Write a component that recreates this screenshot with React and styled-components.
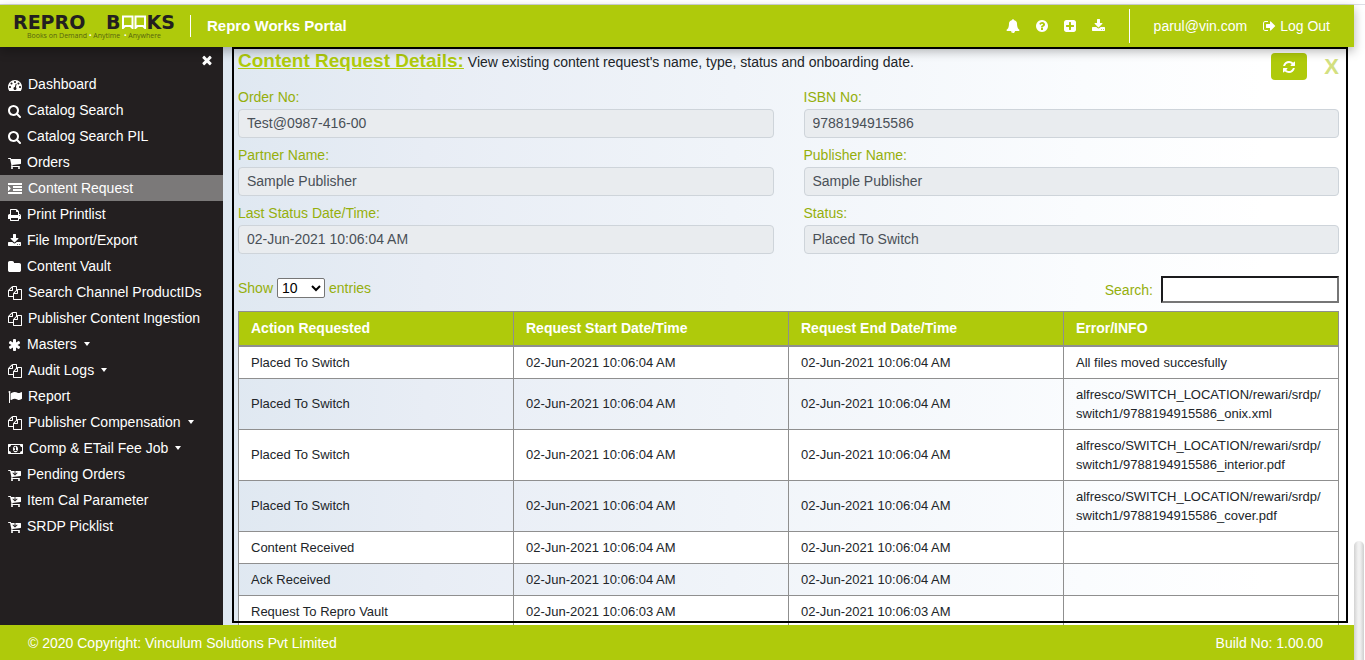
import React, { useState } from 'react';
import styled, { createGlobalStyle } from 'styled-components';

const GlobalStyle = createGlobalStyle`
  * {
    box-sizing: border-box;
  }
  body {
    margin: 0;
    background: #fff;
    color: #212529;
    font-family: 'Liberation Sans', Arial, sans-serif;
    font-size: 14px;
    line-height: 20px;
  }
  button, input, select {
    font-family: inherit;
    font-size: 14px;
  }
`;

const CART =
  'M704 1536q0 52-38 90t-90 38-90-38-38-90 38-90 90-38 90 38 38 90zm896 0q0 52-38 90t-90 38-90-38-38-90 38-90 90-38 90 38 38 90zm128-1088v512q0 24-16.5 42.5t-40.5 21.5l-1044 122q13 60 13 70 0 16-24 64h920q26 0 45 19t19 45-19 45-45 19h-1024q-26 0-45-19t-19-45q0-11 8-31.5t16-36 21.5-40 15.5-29.5l-177-823h-204q-26 0-45-19t-19-45 19-45 45-19h256q16 0 28.5 6.5t19.5 15.5 13 24.5 8 26 5.5 29.5 4.5 26h1201q26 0 45 19t19 45z';

// each icon: [left edge of the view box, glyph width, path]
const icons = {
  bell: [0, 1792, 'M912 1696q0-16-16-16-59 0-101.5-42.5t-42.5-101.5q0-16-16-16t-16 16q0 73 51.5 124.5t124.5 51.5q16 0 16-16zm816-288q0 52-38 90t-90 38h-448q0 106-75 181t-181 75-181-75-75-181h-448q-52 0-90-38t-38-90q50-42 91-88t85-119.5 74.5-158.5 50-206 19.5-260q0-152 117-282.5t307-158.5q-8-19-8-39 0-40 28-68t68-28 68 28 28 68q0 20-8 39 190 28 307 158.5t117 282.5q0 139 19.5 260t50 206 74.5 158.5 85 119.5 91 88z'],
  question: [128, 1536, 'M1024 1376v-192q0-14-9-23t-23-9h-192q-14 0-23 9t-9 23v192q0 14 9 23t23 9h192q14 0 23-9t9-23zm256-672q0-88-55.5-163t-138.5-116-170-41q-243 0-371 213-15 24 8 42l132 100q7 6 19 6 16 0 25-12 53-68 86-92 34-24 86-24 48 0 85.5 26t37.5 59q0 38-20 61t-68 45q-63 28-115.5 86.5t-52.5 125.5v36q0 14 9 23t23 9h192q14 0 23-9t9-23q0-19 21.5-49.5t54.5-49.5q32-18 49-28.5t46-35 44.5-48 28-60.5 12.5-81zm384 192q0 209-103 385.5t-279.5 279.5-385.5 103-385.5-103-279.5-279.5-103-385.5 103-385.5 279.5-279.5 385.5-103 385.5 103 279.5 279.5 103 385.5z'],
  plus: [128, 1536, 'M1408 960v-128q0-26-19-45t-45-19h-320v-320q0-26-19-45t-45-19h-128q-26 0-45 19t-19 45v320h-320q-26 0-45 19t-19 45v128q0 26 19 45t45 19h320v320q0 26 19 45t45 19h128q26 0 45-19t19-45v-320h320q26 0 45-19t19-45zm256-544v960q0 119-84.5 203.5t-203.5 84.5h-960q-119 0-203.5-84.5t-84.5-203.5v-960q0-119 84.5-203.5t203.5-84.5h960q119 0 203.5 84.5t84.5 203.5z'],
  download: [64, 1664, 'M1344 1344q0-26-19-45t-45-19-45 19-19 45 19 45 45 19 45-19 19-45zm256 0q0-26-19-45t-45-19-45 19-19 45 19 45 45 19 45-19 19-45zm128-224v320q0 40-28 68t-68 28h-1472q-40 0-68-28t-28-68v-320q0-40 28-68t68-28h465l135 136q58 56 136 56t136-56l136-136h464q40 0 68 28t28 68zm-325-569q17 41-14 70l-448 448q-18 19-45 19t-45-19l-448-448q-31-29-14-70 17-39 59-39h256v-448q0-26 19-45t45-19h256q26 0 45 19t19 45v448h256q42 0 59 39z'],
  signOut: [64, 1664, 'M704 1440q0 4 1 20t.5 26.5-3 23.5-10 19.5-20.5 6.5h-320q-119 0-203.5-84.5t-84.5-203.5v-704q0-119 84.5-203.5t203.5-84.5h320q13 0 22.5 9.5t9.5 22.5q0 4 1 20t.5 26.5-3 23.5-10 19.5-20.5 6.5h-320q-66 0-113 47t-47 113v704q0 66 47 113t113 47h312l11.5 1 11.5 3 8 5.5 7 9 2 13.5zm928-544q0 26-19 45l-544 544q-19 19-45 19t-45-19-19-45v-288h-448q-26 0-45-19t-19-45v-384q0-26 19-45t45-19h448v-288q0-26 19-45t45-19 45 19l544 544q19 19 19 45z'],
  refresh: [128, 1536, 'M1639 1056q0 5-1 7-64 268-268 434.5t-478 166.5q-146 0-282.5-55t-243.5-157l-129 129q-19 19-45 19t-45-19-19-45v-448q0-26 19-45t45-19h448q26 0 45 19t19 45-19 45l-137 137q71 66 161 102t187 36q134 0 250-65t186-179q11-17 53-117 8-23 30-23h192q13 0 22.5 9.5t9.5 22.5zm25-800v448q0 26-19 45t-45 19h-448q-26 0-45-19t-19-45 19-45l138-138q-148-137-349-137-134 0-250 65t-186 179q-11 17-53 117-8 23-30 23h-199q-13 0-22.5-9.5t-9.5-22.5v-7q65-268 270-434.5t480-166.5q146 0 284 55.5t245 156.5l130-129q19-19 45-19t45 19 19 45z'],
  close: [128, 1536, 'M1490 1322q0 40-28 68l-136 136q-28 28-68 28t-68-28l-294-294-294 294q-28 28-68 28t-68-28l-136-136q-28-28-28-68t28-68l294-294-294-294q-28-28-28-68t28-68l136-136q28-28 68-28t68 28l294 294 294-294q28-28 68-28t68 28l136 136q28 28 28 68t-28 68l-294 294 294 294q28 28 28 68z'],
  dashboard: [0, 1792, 'M384 1152q0-53-37.5-90.5t-90.5-37.5-90.5 37.5-37.5 90.5 37.5 90.5 90.5 37.5 90.5-37.5 37.5-90.5zm192-448q0-53-37.5-90.5t-90.5-37.5-90.5 37.5-37.5 90.5 37.5 90.5 90.5 37.5 90.5-37.5 37.5-90.5zm428 481l101-382q6-26-7.5-48.5t-38.5-29.5-48 6.5-30 39.5l-101 382q-60 5-107 43.5t-63 98.5q-20 77 20 146t117 89 146-20 89-117q16-60-6-117t-72-91zm660-33q0-53-37.5-90.5t-90.5-37.5-90.5 37.5-37.5 90.5 37.5 90.5 90.5 37.5 90.5-37.5 37.5-90.5zm-640-640q0-53-37.5-90.5t-90.5-37.5-90.5 37.5-37.5 90.5 37.5 90.5 90.5 37.5 90.5-37.5 37.5-90.5zm448 192q0-53-37.5-90.5t-90.5-37.5-90.5 37.5-37.5 90.5 37.5 90.5 90.5 37.5 90.5-37.5 37.5-90.5zm320 448q0 261-141 483-19 29-54 29h-1402q-35 0-54-29-141-221-141-483 0-182 71-348t191-286 286-191 348-71 348 71 286 191 191 286 71 348z'],
  search: [64, 1664, 'M1216 832q0-185-131.5-316.5t-316.5-131.5-316.5 131.5-131.5 316.5 131.5 316.5 316.5 131.5 316.5-131.5 131.5-316.5zm512 832q0 52-38 90t-90 38q-54 0-90-38l-343-342q-179 124-399 124-143 0-273.5-55.5t-225-150-150-225-55.5-273.5 55.5-273.5 150-225 225-150 273.5-55.5 273.5 55.5 225 150 150 225 55.5 273.5q0 220-124 399l343 343q37 37 37 90z'],
  cart: [64, 1664, CART],
  cartDown: [64, 1664, `${CART}M1280 640q0-26-19-45t-45-19-45 19l-147 146v-293q0-26-19-45t-45-19-45 19-19 45v293l-147-146q-19-19-45-19t-45 19-19 45 19 45l256 256q19 19 45 19t45-19l256-256q19-19 19-45z`],
  indent: [0, 1792, 'M352 832q0 14-9 23l-288 288q-9 9-23 9-13 0-22.5-9.5t-9.5-22.5v-576q0-13 9.5-22.5t22.5-9.5q14 0 23 9l288 288q9 9 9 23zm1440 480v192q0 13-9.5 22.5t-22.5 9.5h-1728q-13 0-22.5-9.5t-9.5-22.5v-192q0-13 9.5-22.5t22.5-9.5h1728q13 0 22.5 9.5t9.5 22.5zm0-384v192q0 13-9.5 22.5t-22.5 9.5h-1088q-13 0-22.5-9.5t-9.5-22.5v-192q0-13 9.5-22.5t22.5-9.5h1088q13 0 22.5 9.5t9.5 22.5zm0-384v192q0 13-9.5 22.5t-22.5 9.5h-1088q-13 0-22.5-9.5t-9.5-22.5v-192q0-13 9.5-22.5t22.5-9.5h1088q13 0 22.5 9.5t9.5 22.5zm0-384v192q0 13-9.5 22.5t-22.5 9.5h-1728q-13 0-22.5-9.5t-9.5-22.5v-192q0-13 9.5-22.5t22.5-9.5h1728q13 0 22.5 9.5t9.5 22.5z'],
  print: [64, 1664, 'M448 1536h896v-256h-896v256zm0-640h896v-384h-160q-40 0-68-28t-28-68v-160h-640v640zm1152 64q0-26-19-45t-45-19-45 19-19 45 19 45 45 19 45-19 19-45zm128 0v416q0 13-9.5 22.5t-22.5 9.5h-224v160q0 40-28 68t-68 28h-960q-40 0-68-28t-28-68v-160h-224q-13 0-22.5-9.5t-9.5-22.5v-416q0-79 56.5-135.5t135.5-56.5h64v-544q0-40 28-68t68-28h672q40 0 88 20t76 48l152 152q28 28 48 76t20 88v256h64q79 0 135.5 56.5t56.5 135.5z'],
  folder: [64, 1664, 'M1728 608v704q0 92-66 158t-158 66h-1216q-92 0-158-66t-66-158v-960q0-92 66-158t158-66h320q92 0 158 66t66 158v32h672q92 0 158 66t66 158z'],
  files: [0, 1792, 'M1696 384q40 0 68 28t28 68v1216q0 40-28 68t-68 28h-960q-40 0-68-28t-28-68v-288h-544q-40 0-68-28t-28-68v-672q0-40 20-88t48-76l408-408q28-28 76-48t88-20h416q40 0 68 28t28 68v328q68-40 128-40h416zm-544 213l-299 299h299v-299zm-640-384l-299 299h299v-299zm196 647l316-316v-416h-384v416q0 40-28 68t-68 28h-416v640h512v-256q0-40 20-88t48-76zm956 804v-1152h-384v416q0 40-28 68t-68 28h-416v640h896z'],
  asterisk: [64, 1664, 'M1546 1050q46 26 59.5 77.5t-12.5 97.5l-64 110q-26 46-77.5 59.5t-97.5-12.5l-266-153v307q0 52-38 90t-90 38h-128q-52 0-90-38t-38-90v-307l-266 153q-46 26-97.5 12.5t-77.5-59.5l-64-110q-26-46-12.5-97.5t59.5-77.5l266-154-266-154q-46-26-59.5-77.5t12.5-97.5l64-110q26-46 77.5-59.5t97.5 12.5l266 153v-307q0-52 38-90t90-38h128q52 0 90 38t38 90v307l266-153q46-26 97.5-12.5t77.5 59.5l64 110q26 46 12.5 97.5t-59.5 77.5l-266 154z'],
  flag: [0, 1792, 'M320 256q0 72-64 110v1266q0 13-9.5 22.5t-22.5 9.5h-64q-13 0-22.5-9.5t-9.5-22.5v-1266q-64-38-64-110 0-53 37.5-90.5t90.5-37.5 90.5 37.5 37.5 90.5zm1472 64v763q0 25-12.5 38.5t-39.5 27.5q-215 116-369 116-61 0-123.5-22t-108.5-48-115.5-48-142.5-22q-192 0-464 146-17 9-33 9-26 0-45-19t-19-45v-742q0-32 31-55 21-14 79-43 236-120 421-120 107 0 200 29t219 88q38 19 88 19 54 0 117.5-21t110-47 88-47 54.5-21q26 0 45 19t19 45z'],
  money: [0, 1920, 'M768 1152h384v-96h-128v-448h-114l-148 137 77 80q42-37 55-57h2v288h-128v96zm512-256q0 70-21 142t-59.5 134-101.5 101-138 39-138-39-101.5-101-59.5-134-21-142 21-142 59.5-134 101.5-101 138-39 138 39 101.5 101 59.5 134 21 142zm512 256v-512q-106 0-181-75t-75-181h-1152q0 106-75 181t-181 75v512q106 0 181 75t75 181h1152q0-106 75-181t181-75zm128-832v1152q0 26-19 45t-45 19h-1792q-26 0-45-19t-19-45v-1152q0-26 19-45t45-19h1792q26 0 45 19t19 45z'],
};

const Glyph = styled.svg`
  display: block;
  flex: none;
  height: 14px;
  fill: currentColor;
  fill-rule: evenodd;
`;

const Icon = ({ name }) => {
  const [left, width, path] = icons[name];
  return (
    <Glyph viewBox={`${left} 0 ${width} 1792`} width={width / 128} aria-hidden="true">
      <path d={path} />
    </Glyph>
  );
};

const Page = styled.div`
  display: grid;
  grid-template-columns: 1fr 11px;
  height: 100vh;
  padding-top: 4px;
  overflow: hidden;
`;

const Shell = styled.div`
  display: flex;
  flex-direction: column;
  min-width: 0;
  min-height: 0;
  border-top: 1px solid #d3d6d8;
`;

const Rail = styled.div`
  display: flex;
  align-items: flex-end;
  border-top: 1px solid #dcdfe6;
`;

const Thumb = styled.div`
  width: 10px;
  height: 18vh;
  border-radius: 5px 5px 0 0;
  background: linear-gradient(to right, #d2d2d2, #f1f1f1 40%, #f1f1f1 60%, #cfcfcf);
`;

const Header = styled.header`
  display: flex;
  align-items: center;
  flex: none;
  height: 42px;
  padding: 0 24px 0 13px;
  background: #afca0b;
  color: #fff;
  box-shadow: 0 4px 10px rgba(0, 0, 0, 0.3);
  z-index: 1;
`;

const Brand = styled.a`
  display: flex;
  flex-direction: column;
  align-items: center;
  width: 162px;
  color: #231f20;
  text-decoration: none;
`;

const BrandName = styled.span`
  display: flex;
  align-items: center;
  justify-content: space-between;
  width: 100%;
  font-family: 'DejaVu Sans', sans-serif;
  font-size: 19px;
  font-weight: bold;
  line-height: 18px;
`;

const BrandWord = styled.span`
  display: flex;
  align-items: center;
`;

const BookPair = styled.svg`
  width: 26px;
  height: 14px;
  fill: none;
  stroke: #fff;
  stroke-width: 2;
`;

const Tagline = styled.span`
  font-family: 'Open Sans', sans-serif;
  font-size: 7px;
  line-height: 9px;
  color: #566410;
`;

const Dot = styled.span`
  color: #fff;
`;

const PortalName = styled.h1`
  margin: 0 auto 0 15px;
  padding-left: 16px;
  border-left: 1px solid #fff;
  font-size: 15px;
  line-height: 22px;
`;

const Tools = styled.nav`
  display: flex;
  align-items: center;
  gap: 16px;
  height: 34px;
  padding-right: 24px;
  border-right: 1px solid #fff;
`;

const ToolButton = styled.button`
  padding: 0;
  border: 0;
  background: none;
  color: #fff;
  cursor: pointer;
`;

const UserLinks = styled.div`
  display: flex;
  align-items: center;
  gap: 16px;
  padding-left: 24px;
`;

const UserLink = styled.a`
  display: flex;
  align-items: center;
  gap: 4px;
  color: #fff;
  text-decoration: none;
`;

const Body = styled.div`
  display: flex;
  flex: 1;
  min-height: 0;
`;

const Sidebar = styled.aside`
  flex: none;
  width: 223px;
  background: #231f20;
  color: #fff;
`;

const SidebarTop = styled.div`
  display: flex;
  justify-content: flex-end;
  align-items: center;
  height: 24px;
  padding: 2px 10px 0;
`;

const Menu = styled.ul`
  margin: 0;
  padding: 0;
  list-style: none;
`;

const MenuLink = styled.a`
  display: flex;
  align-items: center;
  gap: 6px;
  height: 26px;
  padding-left: 8px;
  background: ${props => (props.$active ? '#7b7979' : 'transparent')};
  color: #fff;
  text-decoration: none;

  svg {
    margin-top: 2px;
  }
`;

const Caret = styled.span`
  margin-left: 1px;
  border: 3px solid transparent;
  border-top: 4px solid #fff;
  border-bottom: 0;
`;

const Main = styled.main`
  display: flex;
  flex: 1;
  min-width: 0;
  padding: 0 6px 2px 9px;
  overflow: hidden;
  background: linear-gradient(to right, #dfe8f1, #e8edf5 18%, #f0f4f9 45%, #fafcfe 76%, #fff 92%);
`;

// the frame is an outline, so that it stays above rows that run past the bottom
const Panel = styled.section`
  flex: 1;
  min-width: 0;
  padding: 2px 9px 0 6px;
  outline: 2px solid #000;
  outline-offset: -2px;
`;

const TitleRow = styled.div`
  display: flex;
  align-items: flex-start;
  height: 38px;
`;

const Title = styled.h2`
  margin: 0 auto 0 0;
  font-size: 14px;
  font-weight: normal;
  line-height: 24px;
`;

const TitleLink = styled.a`
  font-size: 19px;
  font-weight: bold;
  color: #afca0b;
`;

const RefreshButton = styled.button`
  display: flex;
  align-items: center;
  justify-content: center;
  width: 36px;
  height: 27px;
  margin: 4px 17px 0 0;
  border: 0;
  border-radius: 4px;
  background: #afca0b;
  color: #fff;
  cursor: pointer;
`;

const CloseButton = styled.button`
  margin-top: 4px;
  padding: 0;
  border: 0;
  background: none;
  color: #d3e080;
  font-size: 22px;
  font-weight: bold;
  line-height: 27px;
  cursor: pointer;
`;

const Fields = styled.div`
  display: grid;
  grid-template-columns: 1fr 1fr;
  gap: 7px 30px;
`;

const Field = styled.div`
  display: flex;
  flex-direction: column;
  gap: 2px;
`;

const Label = styled.label`
  color: #95af0c;
`;

const FieldInput = styled.input`
  width: 100%;
  height: 29px;
  padding: 0 8px 2px;
  border: 1px solid #ced4da;
  border-radius: 4px;
  background: #e9ecef;
  color: #495057;
`;

const Controls = styled.div`
  display: flex;
  align-items: flex-start;
  justify-content: space-between;
  margin: 22px 0 8px;
`;

const LengthLabel = styled(Label)`
  display: flex;
  align-items: center;
  gap: 4px;
  height: 24px;
`;

const LengthSelect = styled.select`
  width: 48px;
  height: 20px;
  padding: 0;
  border: 1px solid #767676;
  border-radius: 2px;
  background: #fff;
  color: #000;
`;

const SearchLabel = styled(Label)`
  display: flex;
  align-items: center;
  gap: 8px;
`;

const SearchInput = styled.input`
  width: 178px;
  height: 27px;
  border: 2px solid;
  border-color: #1b1b1d #767676 #767676 #1b1b1d;
  background: #fff;
`;

const Table = styled.table`
  width: 100%;
  border-collapse: collapse;
  table-layout: fixed;
  font-size: 13px;
  line-height: 19px;
`;

const HeadCell = styled.th`
  height: 34px;
  padding: 0 12px;
  border: 1px solid #8f8f8f;
  border-bottom-width: 2px;
  background: #afca0b;
  color: #fff;
  font-size: 14px;
  text-align: left;
`;

const Row = styled.tr`
  &:nth-child(odd) {
    background: #fff;
  }
`;

const Cell = styled.td`
  padding: 6px 12px;
  border: 1px solid #8f8f8f;
  overflow-wrap: break-word;
`;

const Footer = styled.footer`
  display: flex;
  align-items: center;
  justify-content: space-between;
  flex: none;
  height: 35px;
  padding: 0 31px 0 28px;
  background: #afca0b;
  color: #fff;
`;

const menu = [
  { icon: 'dashboard', text: 'Dashboard' },
  { icon: 'search', text: 'Catalog Search' },
  { icon: 'search', text: 'Catalog Search PIL' },
  { icon: 'cart', text: 'Orders' },
  { icon: 'indent', text: 'Content Request', active: true },
  { icon: 'print', text: 'Print Printlist' },
  { icon: 'download', text: 'File Import/Export' },
  { icon: 'folder', text: 'Content Vault' },
  { icon: 'files', text: 'Search Channel ProductIDs' },
  { icon: 'files', text: 'Publisher Content Ingestion' },
  { icon: 'asterisk', text: 'Masters', caret: true },
  { icon: 'files', text: 'Audit Logs', caret: true },
  { icon: 'flag', text: 'Report' },
  { icon: 'files', text: 'Publisher Compensation', caret: true },
  { icon: 'money', text: 'Comp & ETail Fee Job', caret: true },
  { icon: 'cartDown', text: 'Pending Orders' },
  { icon: 'cartDown', text: 'Item Cal Parameter' },
  { icon: 'cartDown', text: 'SRDP Picklist' },
];

const tools = [
  { icon: 'bell', label: 'Notifications' },
  { icon: 'question', label: 'Help' },
  { icon: 'plus', label: 'Add' },
  { icon: 'download', label: 'Downloads' },
];

const fields = [
  { id: 'orderNo', label: 'Order No:', value: 'Test@0987-416-00' },
  { id: 'isbnNo', label: 'ISBN No:', value: '9788194915586' },
  { id: 'partnerName', label: 'Partner Name:', value: 'Sample Publisher' },
  { id: 'publisherName', label: 'Publisher Name:', value: 'Sample Publisher' },
  { id: 'lastStatus', label: 'Last Status Date/Time:', value: '02-Jun-2021 10:06:04 AM' },
  { id: 'status', label: 'Status:', value: 'Placed To Switch' },
];

const columns = ['Action Requested', 'Request Start Date/Time', 'Request End Date/Time', 'Error/INFO'];

const location = ['alfresco/SWITCH_LOCATION/rewari/srdp/', 'switch1/9788194915586_'];

const rows = [
  { action: 'Placed To Switch', time: '02-Jun-2021 10:06:04 AM', info: ['All files moved succesfully'] },
  { action: 'Placed To Switch', time: '02-Jun-2021 10:06:04 AM', info: [location[0], `${location[1]}onix.xml`] },
  { action: 'Placed To Switch', time: '02-Jun-2021 10:06:04 AM', info: [location[0], `${location[1]}interior.pdf`] },
  { action: 'Placed To Switch', time: '02-Jun-2021 10:06:04 AM', info: [location[0], `${location[1]}cover.pdf`] },
  { action: 'Content Received', time: '02-Jun-2021 10:06:04 AM', info: [] },
  { action: 'Ack Received', time: '02-Jun-2021 10:06:04 AM', info: [] },
  { action: 'Request To Repro Vault', time: '02-Jun-2021 10:06:03 AM', info: [] },
];

const App = () => {
  const [search, setSearch] = useState('');
  const [length, setLength] = useState('10');

  const visibleRows = rows
    .filter(row => `${row.action} ${row.time} ${row.info.join('')}`.toLowerCase().includes(search.toLowerCase()))
    .slice(0, Number(length));

  return (
    <Page>
      <GlobalStyle />
      <Shell>
        <Header>
          <Brand href="#">
            <BrandName>
              <span>REPRO</span>
              <BrandWord>
                B
                <BookPair viewBox="0 0 26 14" role="img" aria-label="OO">
                  <path d="M2 13V1.500h9.500V13L9.500 11H4zM14.500 13V1.500H24V13L22 11h-5.500z" />
                </BookPair>
                KS
              </BrandWord>
            </BrandName>
            <Tagline>
              Books on Demand <Dot>•</Dot> Anytime &nbsp;<Dot>•</Dot> Anywhere
            </Tagline>
          </Brand>
          <PortalName>Repro Works Portal</PortalName>
          <Tools>
            {tools.map(tool => (
              <ToolButton key={tool.icon} type="button" aria-label={tool.label}>
                <Icon name={tool.icon} />
              </ToolButton>
            ))}
          </Tools>
          <UserLinks>
            <UserLink href="#">parul@vin.com</UserLink>
            <UserLink href="#">
              <Icon name="signOut" />
              Log Out
            </UserLink>
          </UserLinks>
        </Header>
        <Body>
          <Sidebar>
            <SidebarTop>
              <ToolButton type="button" aria-label="Close menu">
                <Icon name="close" />
              </ToolButton>
            </SidebarTop>
            <Menu>
              {menu.map(item => (
                <li key={item.text}>
                  <MenuLink href="#" $active={item.active}>
                    <Icon name={item.icon} />
                    {item.text}
                    {item.caret && <Caret />}
                  </MenuLink>
                </li>
              ))}
            </Menu>
          </Sidebar>
          <Main>
            <Panel>
              <TitleRow>
                <Title>
                  <TitleLink href="#">Content Request Details:</TitleLink>{' '}
                  View existing content request's name, type, status and onboarding date.
                </Title>
                <RefreshButton type="button" aria-label="Refresh">
                  <Icon name="refresh" />
                </RefreshButton>
                <CloseButton type="button">X</CloseButton>
              </TitleRow>
              <Fields>
                {fields.map(field => (
                  <Field key={field.id}>
                    <Label htmlFor={field.id}>{field.label}</Label>
                    <FieldInput id={field.id} value={field.value} readOnly />
                  </Field>
                ))}
              </Fields>
              <Controls>
                <LengthLabel>
                  Show
                  <LengthSelect value={length} onChange={(e) => setLength(e.target.value)}>
                    <option>10</option>
                    <option>25</option>
                    <option>50</option>
                    <option>100</option>
                  </LengthSelect>
                  entries
                </LengthLabel>
                <SearchLabel>
                  Search:
                  <SearchInput type="search" value={search} onChange={(e) => setSearch(e.target.value)} />
                </SearchLabel>
              </Controls>
              <Table>
                <thead>
                  <tr>
                    {columns.map(column => (
                      <HeadCell key={column}>{column}</HeadCell>
                    ))}
                  </tr>
                </thead>
                <tbody>
                  {visibleRows.map((row, index) => (
                    <Row key={index}>
                      <Cell>{row.action}</Cell>
                      <Cell>{row.time}</Cell>
                      <Cell>{row.time}</Cell>
                      <Cell>
                        {row.info.map((line, i) => (
                          <React.Fragment key={line}>
                            {i > 0 && <br />}
                            {line}
                          </React.Fragment>
                        ))}
                      </Cell>
                    </Row>
                  ))}
                </tbody>
              </Table>
            </Panel>
          </Main>
        </Body>
        <Footer>
          <span>© 2020 Copyright: Vinculum Solutions Pvt Limited</span>
          <span>Build No: 1.00.00</span>
        </Footer>
      </Shell>
      <Rail>
        <Thumb />
      </Rail>
    </Page>
  );
};

export default App;
